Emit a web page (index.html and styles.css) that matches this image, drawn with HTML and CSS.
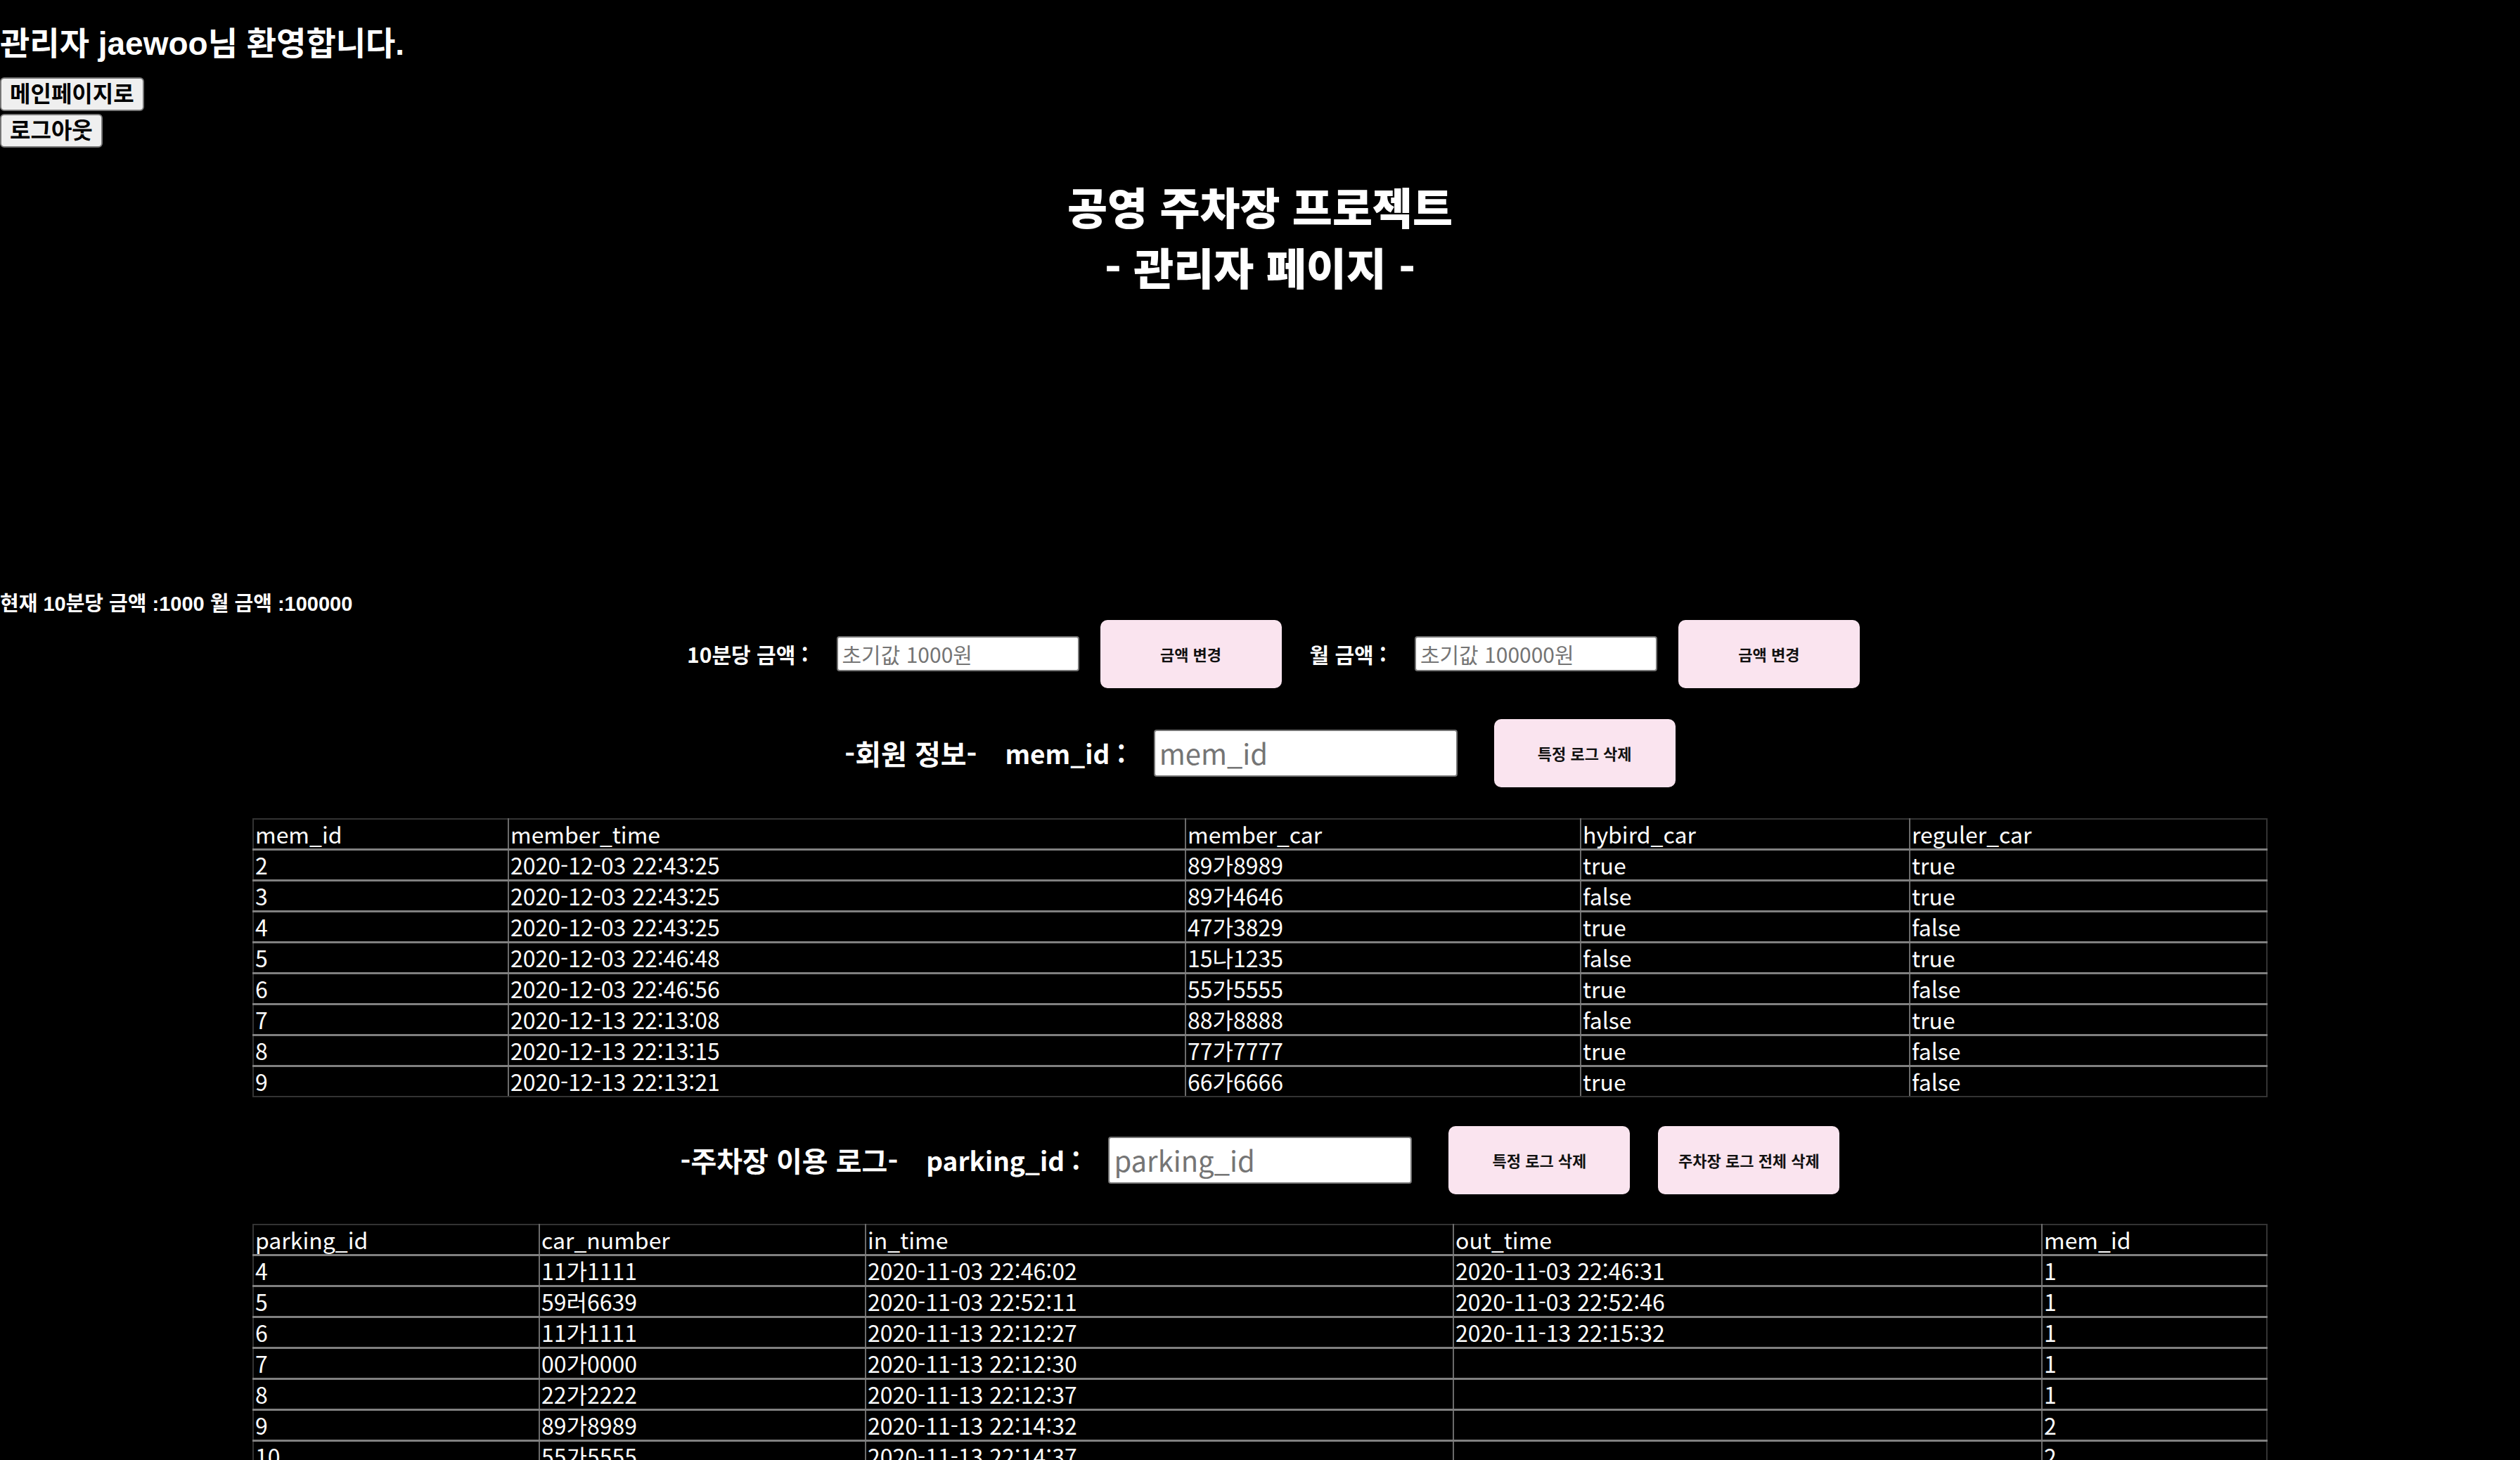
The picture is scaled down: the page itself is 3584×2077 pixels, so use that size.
FILE: index.html
```html
<!DOCTYPE html>
<html lang="ko">
<head>
<meta charset="utf-8">
<title>관리자 페이지</title>
<link rel="stylesheet" href="styles.css">
</head>
<body>
<header class="top">
  <h2 class="welcome">관리자 jaewoo님 환영합니다.</h2>
  <div class="nav-buttons">
    <button class="sys-btn" type="button">메인페이지로</button>
    <button class="sys-btn" type="button">로그아웃</button>
  </div>
</header>

<h1 class="title">공영 주차장 프로젝트<br>- 관리자 페이지 -</h1>

<p class="current-fee">현재 10분당 금액 :1000 월 금액 :100000</p>

<div class="form-row fee-row">
  <span class="label-sm">10분당 금액 :</span>
  <input class="input-sm" type="text" placeholder="초기값 1000원">
  <button class="pink-btn" type="button">금액 변경</button>
  <span class="label-sm">월 금액 :</span>
  <input class="input-sm" type="text" placeholder="초기값 100000원">
  <button class="pink-btn" type="button">금액 변경</button>
</div>

<div class="form-row search-row">
  <span class="label-lg">-회원 정보-</span>
  <span class="label-lg label-id">mem_id :</span>
  <input class="input-lg" type="text" placeholder="mem_id">
  <button class="pink-btn" type="button">특정 로그 삭제</button>
</div>

<table class="data-table">
  <colgroup>
    <col class="m-c1"><col class="m-c2"><col class="m-c3"><col class="m-c4"><col class="m-c5">
  </colgroup>
  <tr><td>mem_id</td><td>member_time</td><td>member_car</td><td>hybird_car</td><td>reguler_car</td></tr>
  <tr><td>2</td><td>2020-12-03 22:43:25</td><td>89가8989</td><td>true</td><td>true</td></tr>
  <tr><td>3</td><td>2020-12-03 22:43:25</td><td>89가4646</td><td>false</td><td>true</td></tr>
  <tr><td>4</td><td>2020-12-03 22:43:25</td><td>47가3829</td><td>true</td><td>false</td></tr>
  <tr><td>5</td><td>2020-12-03 22:46:48</td><td>15나1235</td><td>false</td><td>true</td></tr>
  <tr><td>6</td><td>2020-12-03 22:46:56</td><td>55가5555</td><td>true</td><td>false</td></tr>
  <tr><td>7</td><td>2020-12-13 22:13:08</td><td>88가8888</td><td>false</td><td>true</td></tr>
  <tr><td>8</td><td>2020-12-13 22:13:15</td><td>77가7777</td><td>true</td><td>false</td></tr>
  <tr><td>9</td><td>2020-12-13 22:13:21</td><td>66가6666</td><td>true</td><td>false</td></tr>
</table>

<div class="form-row search-row parking-row">
  <span class="label-lg">-주차장 이용 로그-</span>
  <span class="label-lg label-id">parking_id :</span>
  <input class="input-lg" type="text" placeholder="parking_id">
  <button class="pink-btn" type="button">특정 로그 삭제</button>
  <button class="pink-btn" type="button">주차장 로그 전체 삭제</button>
</div>

<table class="data-table parking-table">
  <colgroup>
    <col class="p-c1"><col class="p-c2"><col class="p-c3"><col class="p-c4"><col class="p-c5">
  </colgroup>
  <tr><td>parking_id</td><td>car_number</td><td>in_time</td><td>out_time</td><td>mem_id</td></tr>
  <tr><td>4</td><td>11가1111</td><td>2020-11-03 22:46:02</td><td>2020-11-03 22:46:31</td><td>1</td></tr>
  <tr><td>5</td><td>59러6639</td><td>2020-11-03 22:52:11</td><td>2020-11-03 22:52:46</td><td>1</td></tr>
  <tr><td>6</td><td>11가1111</td><td>2020-11-13 22:12:27</td><td>2020-11-13 22:15:32</td><td>1</td></tr>
  <tr><td>7</td><td>00가0000</td><td>2020-11-13 22:12:30</td><td></td><td>1</td></tr>
  <tr><td>8</td><td>22가2222</td><td>2020-11-13 22:12:37</td><td></td><td>1</td></tr>
  <tr><td>9</td><td>89가8989</td><td>2020-11-13 22:14:32</td><td></td><td>2</td></tr>
  <tr><td>10</td><td>55가5555</td><td>2020-11-13 22:14:37</td><td></td><td>2</td></tr>
</table>
</body>
</html>
```

FILE: styles.css
```css
html, body {
  margin: 0;
  padding: 0;
  background: #000;
  color: #fff;
}

body {
  font-family: "Liberation Sans", "Noto Sans CJK KR", sans-serif;
}

.welcome {
  margin: 34px 0 20px;
  font-size: 46px;
  font-weight: bold;
  line-height: 56px;
}

.nav-buttons {
  display: flex;
  flex-direction: column;
  align-items: flex-start;
  gap: 4px;
}

.sys-btn {
  box-sizing: border-box;
  height: 48px;
  font-family: "Liberation Sans", "Noto Sans CJK KR", sans-serif;
  font-size: 32px;
  font-weight: bold;
  line-height: 44px;
  padding: 0 12px;
  margin: 0;
  color: #000;
  background: #efefef;
  border: 2px solid #767676;
  border-radius: 6px;
}

.title {
  margin: 40px 0 0;
  text-align: center;
  font-family: "Noto Sans CJK KR", sans-serif;
  font-size: 62px;
  font-weight: 900;
  line-height: 86px;
}

.current-fee {
  margin: 417px 0 0;
  font-size: 29px;
  font-weight: bold;
  line-height: 40px;
}

.form-row {
  display: flex;
  justify-content: center;
  align-items: center;
  font-family: "Noto Sans CJK KR", sans-serif;
  font-weight: bold;
}

.fee-row {
  margin-top: 3px;
  height: 96px;
  gap: 40px;
  padding-left: 38px;
}

.fee-row .input-sm {
  margin-right: -10px;
}

.search-row {
  margin-top: 44px;
  height: 98px;
  gap: 40px;
}

.parking-row {
  margin-top: 40px;
}

.search-row .input-lg {
  margin-right: 12px;
}

.label-sm {
  font-size: 30px;
}

.label-lg {
  font-size: 40px;
}

.label-lg.label-id {
  font-size: 37px;
}

.input-sm,
.input-lg {
  box-sizing: border-box;
  margin: 0;
  padding: 0 6px;
  background: #fff;
  color: #000;
  border: 2px solid #767676;
  border-radius: 4px;
  font-family: "Noto Sans CJK KR", sans-serif;
}

.input-sm {
  width: 345px;
  height: 50px;
  font-size: 30px;
}

.input-lg {
  width: 432px;
  height: 67px;
  font-size: 40px;
}

.input-sm::placeholder,
.input-lg::placeholder {
  color: #757575;
}

.pink-btn {
  box-sizing: border-box;
  width: 258px;
  height: 97px;
  margin: 0;
  padding: 0;
  background: #fae4ef;
  color: #111;
  border: none;
  border-radius: 10px;
  font-family: "Noto Sans CJK KR", sans-serif;
  font-size: 22px;
  font-weight: bold;
}

.data-table {
  width: 2864px;
  margin: 44px auto 0;
  table-layout: fixed;
  border-collapse: collapse;
  border: 2px solid #333;
  font-family: "Noto Sans CJK KR", sans-serif;
  font-size: 32px;
}

.parking-table {
  margin-top: 42px;
}

.data-table td {
  padding: 0 2px;
  line-height: 41px;
  border-left: 2px solid #6b6b6b;
  border-bottom: 3px solid #808080;
  text-align: left;
  vertical-align: bottom;
  white-space: nowrap;
}

.data-table tr:last-child td {
  border-bottom: 2px solid #333;
}

.data-table td:first-child {
  border-left: 2px solid #333;
}

.m-c1 { width: 363px; }
.m-c2 { width: 963px; }
.m-c3 { width: 562px; }
.m-c4 { width: 468px; }
.m-c5 { width: 508px; }

.p-c1 { width: 407px; }
.p-c2 { width: 464px; }
.p-c3 { width: 836px; }
.p-c4 { width: 837px; }
.p-c5 { width: 320px; }
```
